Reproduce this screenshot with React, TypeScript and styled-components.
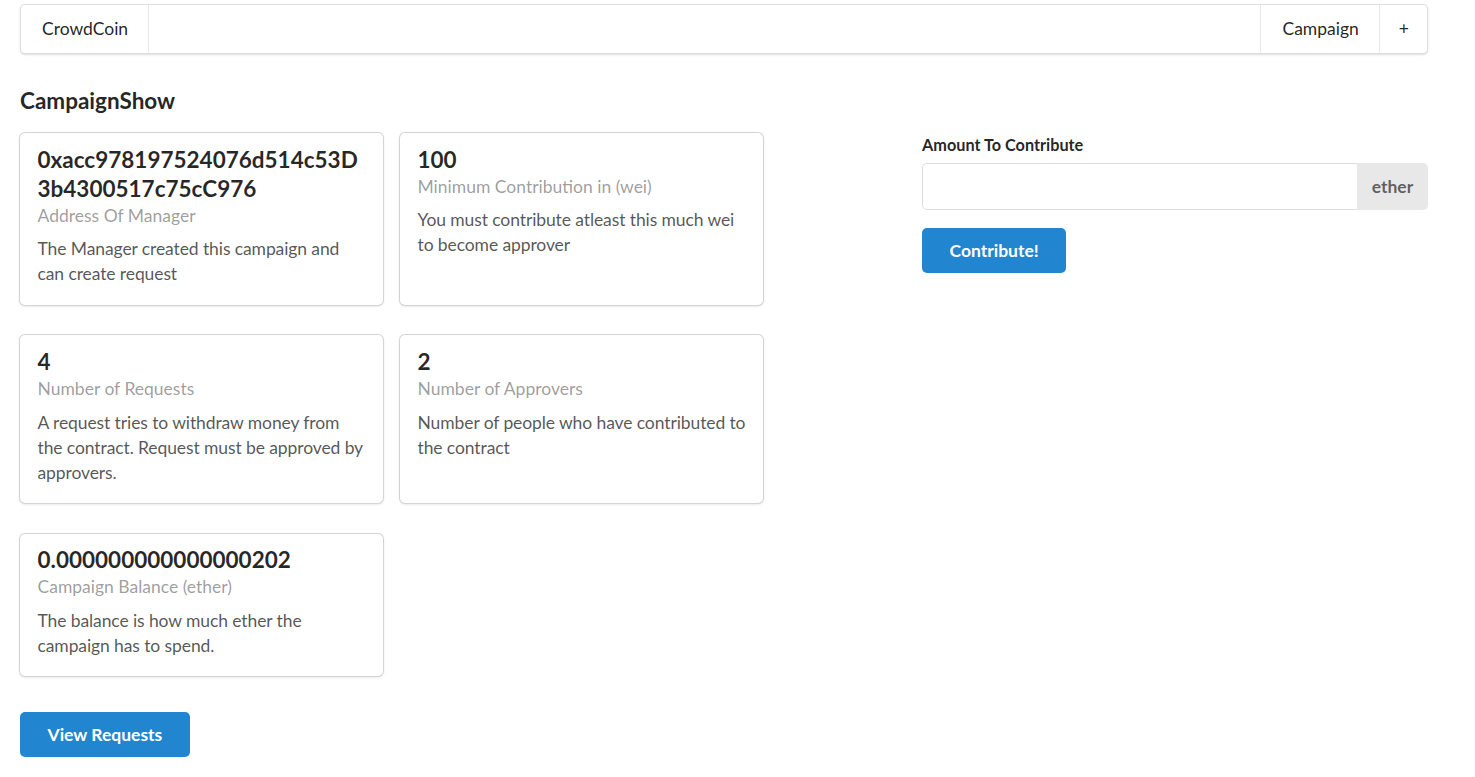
import React from "react";
import styled, { createGlobalStyle } from "styled-components";

const Global = createGlobalStyle`
  html, body { margin: 0; padding: 0; background: #fff; }
  body {
    font-family: Lato, "Helvetica Neue", Arial, Helvetica, sans-serif;
    font-size: 17.5px;
    line-height: 1.4285em;
    color: rgba(0,0,0,0.87);
  }
  * { box-sizing: border-box; }
`;

const Page = styled.div`
  width: 1408px;
  margin: 0 0 0 20px;
  padding-top: 4px;
  padding-bottom: 20px;
`;

const Menu = styled.nav`
  display: flex;
  height: 50px;
  background: #fff;
  border: 1px solid rgba(34,36,38,0.15);
  box-shadow: 0 1px 2px 0 rgba(34,36,38,0.15);
  border-radius: 5px;
`;

const MenuItem = styled.a<{ $left?: boolean; $right?: boolean; $pad?: number }>`
  display: flex;
  align-items: center;
  padding: 0 ${(p) => p.$pad ?? 20}px 0 ${(p) => (p.$pad ?? 20) + 1}px;
  font-size: 17.5px;
  line-height: 1;
  color: rgba(0,0,0,0.87);
  text-decoration: none;
  border-left: ${(p) => (p.$left ? "1px solid rgba(34,36,38,0.1)" : "none")};
  border-right: ${(p) => (p.$right ? "1px solid rgba(34,36,38,0.1)" : "none")};
`;

const Spacer = styled.div`
  flex: 1;
`;

const Heading = styled.h3`
  margin: 32px 0 0;
  font-size: 22.5px;
  line-height: 29px;
  font-weight: 700;
  color: rgba(0,0,0,0.87);
`;

const Grid = styled.div`
  display: grid;
  grid-template-columns: 867px 506px;
  column-gap: 35px;
  margin-top: 18px;
`;

const Cards = styled.div`
  display: flex;
  flex-wrap: wrap;
  column-gap: 17.5px;
  row-gap: 30.5px;
  width: 760px;
`;

const Card = styled.div`
  width: 362.5px;
  background: #fff;
  border-radius: 5px;
  box-shadow: 0 1px 3px 0 #d4d4d5, 0 0 0 1px #d4d4d5;
  padding: 17.5px 17px 18.5px 17.5px;
  display: flex;
  flex-direction: column;
`;

const CardHeader = styled.div`
  margin-top: -4.8px;
  font-size: 22.5px;
  line-height: 28.9px;
  font-weight: 700;
  color: rgba(0,0,0,0.85);
  overflow-wrap: anywhere;
`;

const CardMeta = styled.div`
  margin-top: -1px;
  font-size: 17.5px;
  line-height: 25px;
  color: rgba(0,0,0,0.4);
`;

const CardDesc = styled.div`
  margin-top: 8.75px;
  font-size: 17.5px;
  line-height: 25px;
  letter-spacing: -0.1px;
  color: rgba(0,0,0,0.68);
`;

const Side = styled.div`
  padding-top: 0;
`;

const Label = styled.label`
  display: block;
  font-size: 16.25px;
  font-weight: 700;
  line-height: 23.2px;
  margin-bottom: 7px;
  color: rgba(0,0,0,0.87);
`;

const InputWrap = styled.div`
  display: flex;
  height: 47px;
`;

const Input = styled.input`
  flex: 1;
  min-width: 0;
  border: 1px solid rgba(34,36,38,0.15);
  border-right: none;
  border-radius: 5px 0 0 5px;
  padding: 11.875px 17.5px;
  font-family: Lato, Arial, sans-serif;
  font-size: 17.5px;
  line-height: 21.25px;
  outline: none;
`;

const InputLabel = styled.div`
  width: 71px;
  display: flex;
  align-items: center;
  justify-content: center;
  background: #e8e8e8;
  color: rgba(0,0,0,0.6);
  font-weight: 700;
  font-size: 17.5px;
  border-radius: 0 5px 5px 0;
`;

const Button = styled.button<{ $mt: number }>`
  display: inline-block;
  margin-top: ${(p) => p.$mt}px;
  background: #2185d0;
  color: #fff;
  border: none;
  border-radius: 5px;
  padding: 13.75px 27.5px;
  font-family: Lato, Arial, sans-serif;
  font-size: 17.5px;
  font-weight: 700;
  line-height: 17.5px;
  cursor: pointer;
`;

const items = [
  {
    header: "0xacc978197524076d514c53D3b4300517c75cC976",
    meta: "Address Of Manager",
    description: "The Manager created this campaign and can create request",
  },
  {
    header: "100",
    meta: "Minimum Contribution in (wei)",
    description: "You must contribute atleast this much wei to become approver",
  },
  {
    header: "4",
    meta: "Number of Requests",
    description:
      "A request tries to withdraw money from the contract. Request must be approved by approvers.",
  },
  {
    header: "2",
    meta: "Number of Approvers",
    description: "Number of people who have contributed to the contract",
  },
  {
    header: "0.000000000000000202",
    meta: "Campaign Balance (ether)",
    description: "The balance is how much ether the campaign has to spend.",
  },
];

export default function App() {
  return (
    <>
      <Global />
      <Page>
        <Menu>
          <MenuItem $right>CrowdCoin</MenuItem>
          <Spacer />
          <MenuItem $left $pad={20}>Campaign</MenuItem>
          <MenuItem $left $pad={18}>+</MenuItem>
        </Menu>
        <Heading>CampaignShow</Heading>
        <Grid>
          <div>
            <Cards>
              {items.map((it) => (
                <Card key={it.meta}>
                  <CardHeader>{it.header}</CardHeader>
                  <CardMeta>{it.meta}</CardMeta>
                  <CardDesc>{it.description}</CardDesc>
                </Card>
              ))}
            </Cards>
          </div>
          <Side>
            <Label>Amount To Contribute</Label>
            <InputWrap>
              <Input />
              <InputLabel>ether</InputLabel>
            </InputWrap>
            <Button $mt={18}>Contribute!</Button>
          </Side>
        </Grid>
        <Button $mt={36}>View Requests</Button>
      </Page>
    </>
  );
}
